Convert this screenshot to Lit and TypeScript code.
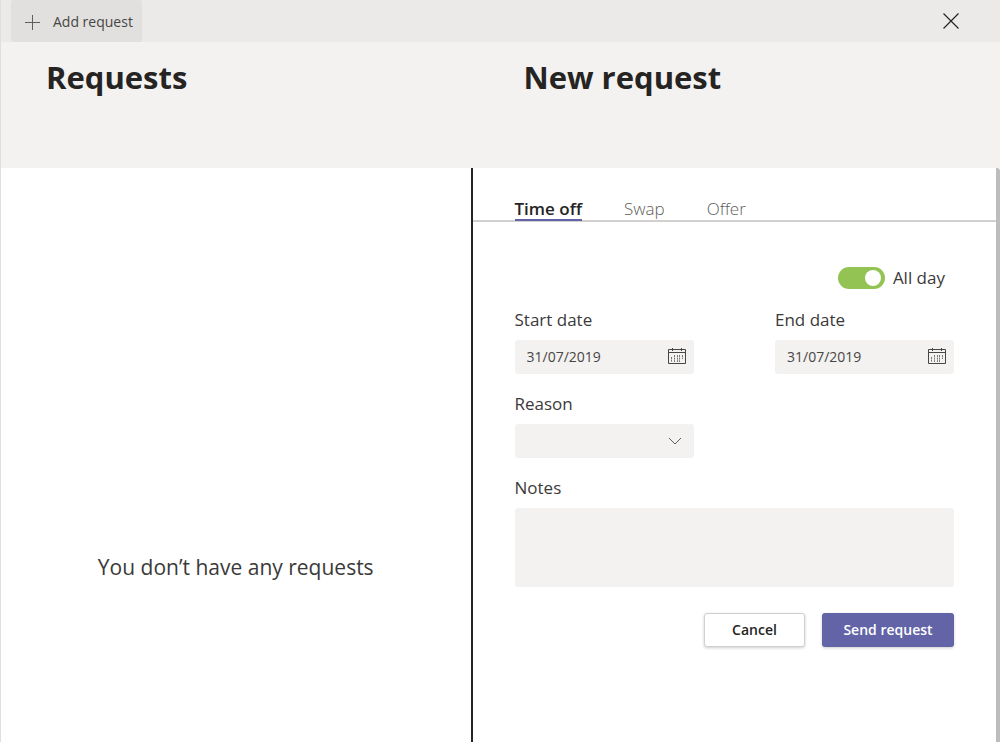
import { LitElement, html, css, svg } from "lit";
import { customElement, property, state } from "lit/decorators.js";
import { classMap } from "lit/directives/class-map.js";

const plusIcon = html`<svg width="16" height="16" viewBox="0 0 16 16" fill="none" stroke="#605e5c" aria-hidden="true">
  <path d="M8.5 1v15M1 8.5h15" />
</svg>`;

const closeIcon = html`<svg width="18" height="18" viewBox="0 0 18 18" fill="none" stroke="#252423" stroke-width="1.2" aria-hidden="true">
  <path d="M1.5 1.5l15 15M16.5 1.5l-15 15" />
</svg>`;

const calendarIcon = html`<svg width="18" height="18" viewBox="0 0 18 18" fill="none" stroke="#484644" aria-hidden="true">
  <path d="M.5 1.5h17v14H.5zM.5 4.5h17M4.5 0v3M13.5 0v3" />
  ${[3.5, 6.5, 9.5, 11.5, 14.5].map(
    (x, i) => svg`<path d="M${x} ${i < 1 ? 9 : 7}V${i > 3 ? 11 : 14}" stroke="#797775" stroke-dasharray="2 .6" />`
  )}
</svg>`;

const chevronIcon = html`<svg class="chevron" width="14" height="8" viewBox="0 0 14 8" fill="none" stroke="#605e5c" aria-hidden="true">
  <path d="M1 1l6 6 6-6" />
</svg>`;

@customElement("date-field")
class DateField extends LitElement {
  @property() label = "";
  @property() value = "";

  static styles = css`
    :host { display: block; }
    .label { display: block; font-size: 17px; line-height: 24px; margin-bottom: 8px; }
    .box {
      display: flex; align-items: center; height: 34px; box-sizing: border-box;
      padding: 0 8px 0 12px; background: #f3f2f1; border-radius: 3px;
    }
    .input {
      flex: 1; min-width: 0; padding: 0; border: 0; background: none; outline-offset: 4px;
      font: inherit; font-size: 14px; line-height: 20px; color: #484644;
    }
    .pick { display: flex; padding: 0; border: 0; background: none; cursor: pointer; }
  `;

  render() {
    return html`
      <label class="label" for="date">${this.label}</label>
      <div class="box">
        <input class="input" id="date" type="text" .value=${this.value} />
        <button class="pick" type="button" aria-label="Choose ${this.label}">${calendarIcon}</button>
      </div>
    `;
  }
}

@customElement("app-root")
class AppRoot extends LitElement {
  @state() private tab = "Time off";

  static styles = css`
    :host {
      display: flex; flex-direction: column; min-height: 100vh; box-sizing: border-box;
      border-left: 1px solid #e1dfdd; background: #fff; color: #3b3a39;
      font-family: "Segoe UI", "Open Sans", "Noto Sans", sans-serif;
    }
    button, input, select, textarea { font: inherit; color: inherit; }
    .toolbar {
      display: flex; align-items: stretch; justify-content: space-between;
      height: 42px; padding: 0 40px 0 10px; background: #ebeae9;
    }
    .add {
      display: flex; align-items: center; gap: 13px; padding: 1px 9px 0 13px;
      border: 0; border-radius: 3px; background: #e1e0df; color: #484644;
      font-size: 14px; line-height: 20px; cursor: pointer;
    }
    .close { display: flex; align-items: center; padding: 0; border: 0; background: none; cursor: pointer; }
    .header, .body { display: grid; grid-template-columns: 47fr 53fr; }
    .header { min-height: 126px; background: #f3f2f1; }
    .title { margin: 0; padding: 14px 0 0 45px; font-size: 31px; line-height: 42px; font-weight: 700; color: #252423; }
    .title.new { padding-left: 53px; }
    .body { flex: 1; }
    .empty { margin: 0; padding-top: 383px; text-align: center; font-size: 21px; line-height: 32px; }
    .panel { border-left: 2px solid #252423; border-right: 4px solid #bdbdbd; border-top-right-radius: 3px; }
    .tabs { display: flex; align-items: flex-end; gap: 42px; height: 52px; padding-left: 42px; border-bottom: 2px solid #d2d0ce; }
    .tab {
      margin-bottom: -1px; padding: 0; border: 0; border-bottom: 2px solid transparent; background: none;
      font-size: 17px; line-height: 20px; font-weight: 300; color: #605e5c; cursor: pointer;
    }
    .tab.active { border-bottom-color: #6264a7; font-weight: 600; color: #252423; }
    .form { display: flex; flex-direction: column; gap: 18px; padding: 44px 42px 40px 42px; }
    .allday { display: flex; align-items: center; justify-content: flex-end; gap: 8px; padding-right: 9px; font-size: 17px; line-height: 24px; }
    .switch {
      appearance: none; display: flex; align-items: center; justify-content: flex-start;
      width: 47px; height: 22px; margin: 0; padding: 0 4px; box-sizing: border-box;
      border-radius: 11px; background: #8a8886; cursor: pointer;
    }
    .switch::before { content: ""; width: 16px; height: 16px; border-radius: 50%; background: #fff; }
    .switch:checked { justify-content: flex-end; background: #92c353; }
    .dates { display: flex; justify-content: space-between; gap: 24px; }
    .narrow { width: 179px; }
    .label { display: block; font-size: 17px; line-height: 24px; margin-bottom: 8px; }
    .selectbox { display: grid; align-items: center; }
    .select {
      grid-area: 1 / 1; appearance: none; width: 100%; height: 34px; padding: 0 32px 0 12px;
      border: 0; border-radius: 3px; background: #f3f2f1; font-size: 14px;
    }
    .chevron { grid-area: 1 / 1; justify-self: end; margin-right: 12px; pointer-events: none; }
    .notes {
      display: block; width: 100%; height: 79px; box-sizing: border-box; padding: 8px 12px;
      border: 0; border-radius: 3px; background: #f3f2f1; resize: none; font-size: 14px;
    }
    .actions { display: flex; justify-content: flex-end; gap: 17px; padding-top: 8px; }
    .action {
      height: 34px; box-sizing: border-box; border-radius: 3px; font-size: 14px; line-height: 20px; font-weight: 600;
      box-shadow: 0 1px 3px rgba(0, 0, 0, 0.2); cursor: pointer;
    }
    .cancel { min-width: 101px; padding: 0 16px; border: 1px solid #d2d0ce; background: #fff; color: #252423; }
    .send { min-width: 132px; padding: 0 16px; border: 0; background: #6264a7; color: #fff; }
  `;

  render() {
    return html`
      <div class="toolbar">
        <button class="add" type="button">${plusIcon}<span>Add request</span></button>
        <button class="close" type="button" aria-label="Close">${closeIcon}</button>
      </div>
      <header class="header">
        <h1 class="title">Requests</h1>
        <h2 class="title new">New request</h2>
      </header>
      <main class="body">
        <p class="empty">You don’t have any requests</p>
        <section class="panel">
          <div class="tabs" role="tablist">
            ${["Time off", "Swap", "Offer"].map(
              (name) => html`<button
                type="button"
                role="tab"
                aria-selected=${name === this.tab}
                class=${classMap({ tab: true, active: name === this.tab })}
                @click=${() => (this.tab = name)}
              >${name}</button>`
            )}
          </div>
          <form class="form">
            <label class="allday"><input class="switch" type="checkbox" role="switch" checked />All day</label>
            <div class="dates">
              <date-field class="narrow" label="Start date" value="31/07/2019"></date-field>
              <date-field class="narrow" label="End date" value="31/07/2019"></date-field>
            </div>
            <div class="narrow">
              <label class="label" for="reason">Reason</label>
              <div class="selectbox">
                <select class="select" id="reason"><option></option></select>
                ${chevronIcon}
              </div>
            </div>
            <div>
              <label class="label" for="notes">Notes</label>
              <textarea class="notes" id="notes"></textarea>
            </div>
            <div class="actions">
              <button class="action cancel" type="button">Cancel</button>
              <button class="action send" type="button">Send request</button>
            </div>
          </form>
        </section>
      </main>
    `;
  }
}
